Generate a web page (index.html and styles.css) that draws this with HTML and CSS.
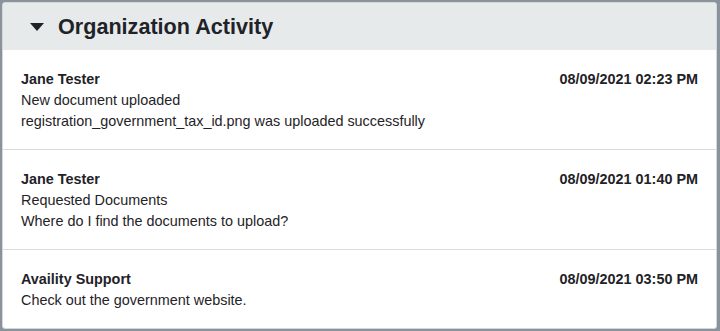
FILE: index.html
```html
<!DOCTYPE html>
<html>
<head>
<meta charset="utf-8">
<link rel="stylesheet" href="styles.css">
</head>
<body>
<div class="frame">
  <section class="card">
    <header class="card-header">
      <svg class="caret" width="14" height="8" viewBox="0 0 14 8"><polygon points="0,0 14,0 7,8" fill="#1f2327"/></svg>
      <h2 class="title">Organization Activity</h2>
    </header>
    <div class="item">
      <div class="item-top"><span class="name">Jane Tester</span><span class="date">08/09/2021 02:23 PM</span></div>
      <div class="line">New document uploaded</div>
      <div class="line">registration_government_tax_id.png was uploaded successfully</div>
    </div>
    <div class="item">
      <div class="item-top"><span class="name">Jane Tester</span><span class="date">08/09/2021 01:40 PM</span></div>
      <div class="line">Requested Documents</div>
      <div class="line">Where do I find the documents to upload?</div>
    </div>
    <div class="item item-last">
      <div class="item-top"><span class="name">Availity Support</span><span class="date">08/09/2021 03:50 PM</span></div>
      <div class="line">Check out the government website.</div>
    </div>
  </section>
</div>
</body>
</html>
```
FILE: styles.css
```css
html, body {
  margin: 0;
  padding: 0;
}
body {
  width: 720px;
  height: 331px;
  background: #8a939b;
  font-family: "Liberation Sans", Arial, sans-serif;
  color: #1f2327;
}
.frame {
  padding: 2px 3px 2px 2px;
  height: 331px;
  box-sizing: border-box;
}
.card {
  height: 100%;
  box-sizing: border-box;
  background: #fff;
  border: 1px solid #d4d8db;
  border-radius: 3px;
  overflow: hidden;
}
.card-header {
  height: 47px;
  background: #e7eaeb;
  display: flex;
  align-items: center;
  padding-left: 27px;
}
.caret {
  display: block;
  margin-right: 14px;
  margin-top: 1px;
}
.title {
  margin: 0;
  font-size: 21.6px;
  font-weight: bold;
  color: #1f2327;
}
.item {
  height: 100px;
  box-sizing: border-box;
  padding: 19px 18px 0 18px;
  border-bottom: 1px solid #dadde0;
  font-size: 14.4px;
  line-height: 21px;
}
.item-last {
  border-bottom: none;
}
.item-top {
  display: flex;
  justify-content: space-between;
}
.name, .date {
  font-weight: bold;
}
.line {
  color: #1f2327;
}
```
